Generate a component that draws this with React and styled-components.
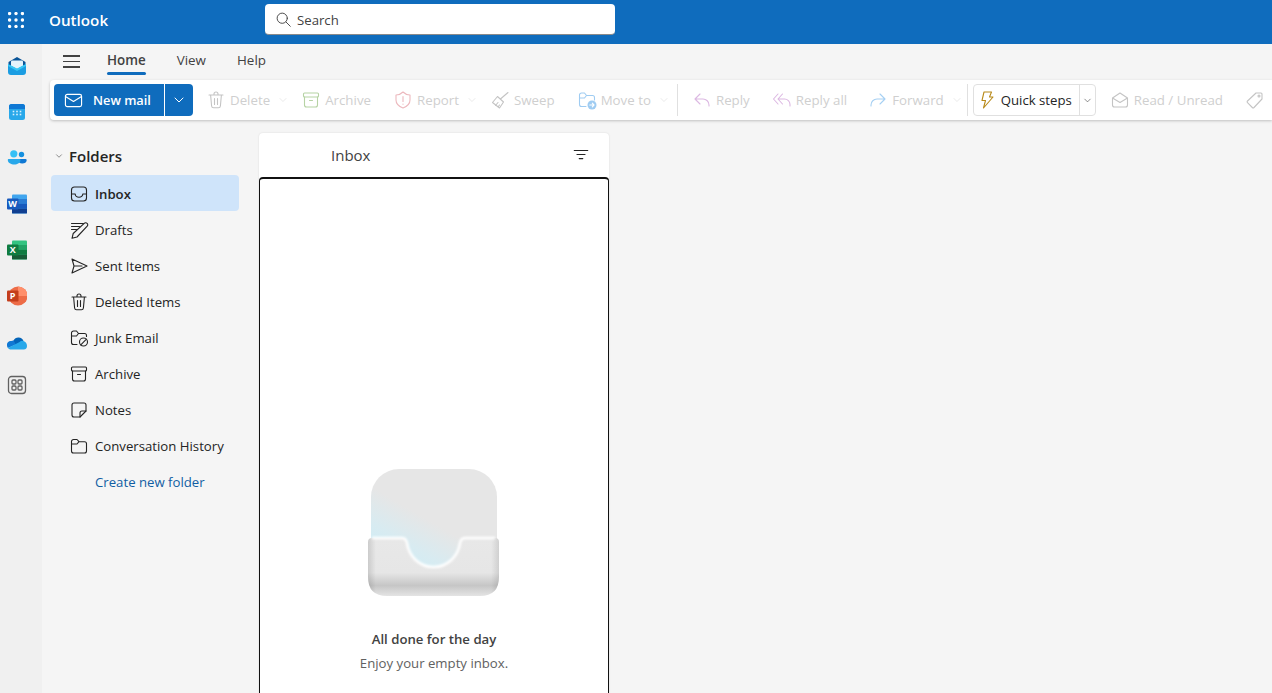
import styled, { createGlobalStyle } from "styled-components";
import { ChevronDown } from "lucide-react";

const GlobalStyle = createGlobalStyle`
  html, body {
    margin: 0;
    height: 100%;
    overflow: hidden;
    background: #f5f5f5;
    font-family: "Open Sans", "Noto Sans", sans-serif;
    font-size: 13.2px;
    color: #242424;
  }
  * { box-sizing: border-box; }
`;

const Line = ({ size = 20, children, ...rest }) => (
  <svg
    width={size}
    height={size}
    viewBox="0 0 20 20"
    fill="none"
    stroke="currentColor"
    strokeWidth="1.1"
    strokeLinecap="round"
    strokeLinejoin="round"
    {...rest}
  >
    {children}
  </svg>
);

const icons = {
  trash: <path d="M3 5h14M8 5V4a2 2 0 0 1 4 0v1M4.6 5l1 11a2 2 0 0 0 2 1.8h4.8a2 2 0 0 0 2-1.8l1-11M8.5 8.5v6M11.5 8.5v6" />,
  archive: (
    <>
      <rect x="2.5" y="3" width="15" height="4" rx="1" />
      <path d="M3.5 7v8a2 2 0 0 0 2 2h9a2 2 0 0 0 2-2V7M8.5 10.5h3" />
    </>
  ),
  shield: (
    <>
      <path d="M10 2c2 2 4.5 3 7 3v5c0 4-3 6.5-7 8-4-1.5-7-4-7-8V5c2.5 0 5-1 7-3z" />
      <path d="M10 6.5v5M10 14v.2" />
    </>
  ),
  sweep: <path d="M18 2.5l-7 6M7.5 6.5l6 5.5-4 6-7-5.5zM5.5 15.5l2.5-3M8 17l1.5-2" />,
  moveto: (
    <>
      <path d="M9 16.5H4.500a2 2 0 0 1-2-2V5a2 2 0 0 1 2-2h3l2 2.5h6a2 2 0 0 1 2 2V10M2.500 8h5l2-2.500" />
      <circle cx="15" cy="15" r="4.5" fill="currentColor" stroke="none" />
      <path d="M12.800 15h4.200M15.300 13.200L17 15l-1.700 1.800" stroke="#fff" />
    </>
  ),
  reply: <path d="M8 4L3 9l5 5M3 9h8a6 6 0 0 1 6 6v1" />,
  replyAll: <path d="M6 4L1.500 9 6 14M10.500 4L6 9l4.500 5M6 9h6.500a5.500 5.500 0 0 1 5.500 5.500V16" />,
  forward: <path d="M12 4l5 5-5 5M17 9H9a6 6 0 0 0-6 6v1" />,
  bolt: <path d="M7 2h7.500l-2 5H16L6.500 18l2-7.500H5z" />,
  readUnread: <path d="M2.500 8L10 3l7.500 5v7a2 2 0 0 1-2 2h-11a2 2 0 0 1-2-2zM2.500 8L10 12.500 17.500 8" />,
  tag: (
    <>
      <path d="M11 3h5a1 1 0 0 1 1 1v5l-8 8.500a1.200 1.200 0 0 1-1.700 0l-4.800-4.800a1.200 1.200 0 0 1 0-1.700z" />
      <circle cx="14" cy="6" r="1" />
    </>
  ),
  inbox: (
    <>
      <rect x="2.500" y="3" width="15" height="14" rx="3" />
      <path d="M2.500 10h3.700a3.800 3.300 0 0 0 7.600 0h3.700" />
    </>
  ),
  drafts: <path d="M2.500 3.500h12M2.500 6.500h8M2.500 9.500h5M15.200 3.400a2 2 0 0 1 3 2.800L8 17l-5 1.300 1.200-4.800z" />,
  sent: <path d="M3 3l15 7-15 7 2-7zM5 10h8" />,
  junk: (
    <>
      <path d="M8 16.500H4.500a2 2 0 0 1-2-2V5a2 2 0 0 1 2-2h3l2 2.500h6a2 2 0 0 1 2 2v1M2.500 8h5l2-2.500" />
      <circle cx="14.500" cy="14" r="4" />
      <path d="M11.800 16.800l5.400-5.400" />
    </>
  ),
  notes: (
    <>
      <path d="M5 3h10a2 2 0 0 1 2 2v6l-6 6H5a2 2 0 0 1-2-2V5a2 2 0 0 1 2-2z" />
      <path d="M17 11h-4a2 2 0 0 0-2 2v4" />
    </>
  ),
  folder: <path d="M2.500 5.500a2 2 0 0 1 2-2H8l2 2.200h5.500a2 2 0 0 1 2 2V15a2 2 0 0 1-2 2h-11a2 2 0 0 1-2-2zM2.500 8H8l2-2.300" />,
};

const WaffleIcon = () => (
  <svg width="16" height="16" viewBox="0 0 16 16" fill="#fff">
    {[1.6, 8, 14.4].flatMap((y) =>
      [1.6, 8, 14.4].map((x) => <circle key={`${x}-${y}`} cx={x} cy={y} r="1.7" />)
    )}
  </svg>
);

const MailApp = () => (
  <svg width="20" height="20" viewBox="0 0 20 20">
    <path d="M10 1l8.500 5v4h-17V6z" fill="#0a5497" />
    <rect x="4" y="4.500" width="12" height="7" rx="1" fill="#e4f3fb" />
    <path d="M1 8l9 5 9-5v8a3 3 0 0 1-3 3H4a3 3 0 0 1-3-3z" fill="#1b9de2" />
    <path d="M1 8l9 4.500L19 8v2l-9 5-9-5z" fill="#37c6f4" />
  </svg>
);

const CalendarApp = () => (
  <svg width="18" height="18" viewBox="0 0 18 18">
    <rect x="1" y="1" width="16" height="16" rx="2.500" fill="#28a8ea" />
    <path d="M1 6V3.500A2.500 2.500 0 0 1 3.500 1h11A2.500 2.500 0 0 1 17 3.500V6z" fill="#0f78d4" />
    {[5.5, 9, 12.5].flatMap((x) =>
      [8.5, 11.5].map((y) => <rect key={`${x}-${y}`} x={x - 0.8} y={y - 0.8} width="1.6" height="1.6" fill="#d8f0fd" />)
    )}
  </svg>
);

const PeopleApp = () => (
  <svg width="20" height="20" viewBox="0 0 20 20">
    <circle cx="14.500" cy="6.500" r="2.700" fill="#1490df" />
    <path d="M11 11h7.500a1.200 1.200 0 0 1 1.200 1.200c0 2-2 3.300-4.500 3.300S11 14 11 11z" fill="#0f78d4" />
    <circle cx="6.800" cy="5.800" r="3.600" fill="#36c0f5" />
    <path d="M1.500 11h11a1 1 0 0 1 1 1c0 2.800-3 4.500-6.200 4.500S.8 14.800.8 12a1 1 0 0 1 .7-1z" fill="#28a8ea" />
  </svg>
);

const OfficeDoc = ({ back, stripes, badge, letter }) => (
  <svg width="20" height="20" viewBox="0 0 20 20">
    <rect x="5" y="0.5" width="15" height="19" rx="1" fill={back} />
    {stripes.map((c, i) => (
      <rect key={c} x="5" y={5 + i * 4.8} width="15" height="4.8" fill={c} />
    ))}
    <rect x="0" y="4.500" width="11.500" height="11" rx="1" fill={badge} />
    <text x="5.700" y="13.300" fontSize="9" fontWeight="700" textAnchor="middle" fill="#fff" fontFamily="Open Sans, sans-serif">
      {letter}
    </text>
  </svg>
);

const PowerPointApp = () => (
  <svg width="20" height="20" viewBox="0 0 20 20">
    <circle cx="11" cy="10" r="9.500" fill="#ed6c47" />
    <path d="M11 .5a9.500 9.500 0 0 1 9.500 9.500H11z" fill="#ff8f6b" />
    <rect x="0" y="4.500" width="11.500" height="11" rx="1" fill="#c43e1c" />
    <text x="5.700" y="13.300" fontSize="9" fontWeight="700" textAnchor="middle" fill="#fff" fontFamily="Open Sans, sans-serif">
      P
    </text>
  </svg>
);

const OneDriveApp = () => (
  <svg width="20" height="16" viewBox="0 0 20 16">
    <path d="M6.500 6.500A5.500 5.500 0 0 1 16.500 7L11 12 4 9.500z" fill="#0364b8" />
    <path d="M6.500 6.500a4.500 4.500 0 0 0-2.200.5A3.800 3.800 0 0 0 0 11.500c0 .9.300 1.800.9 2.500L9 10.500z" fill="#0f78d4" />
    <path d="M16.500 7a3.800 3.800 0 0 0-3.900 1L.9 14c.6.900 1.700 1.500 3.100 1.500h12.800A3.500 3.500 0 0 0 20 12c0-2.500-1.500-4.500-3.500-5z" fill="#28a8ea" />
  </svg>
);

const MoreAppsIcon = () => (
  <svg width="20" height="20" viewBox="0 0 20 20" fill="none" stroke="#616161" strokeWidth="1.3">
    <rect x="1.500" y="1.500" width="17" height="17" rx="3" />
    <rect x="5" y="5" width="4" height="4" rx="1" />
    <rect x="11" y="5" width="4" height="4" rx="1" />
    <rect x="5" y="11" width="4" height="4" rx="1" />
    <rect x="11" y="11" width="4" height="4" rx="1" />
  </svg>
);

const TRAY = "M4 69H34Q38 69 39 74C41 88 52 98 65.500 98C79 98 90 88 92 74Q93 69 97 69H127Q131 69 131 73V108Q131 127 112 127H19Q0 127 0 108V73Q0 69 4 69Z";

const EmptyInboxArt = () => (
  <svg width="132" height="128" viewBox="0 0 132 128">
    <defs>
      <linearGradient id="back" x1="0.2" y1="0.85" x2="0.46" y2="0.42">
        <stop offset="0" stopColor="#cdeef7" />
        <stop offset="0.5" stopColor="#d8ebf1" />
        <stop offset="1" stopColor="#e6e6e6" />
      </linearGradient>
      <linearGradient id="tray" x1="0" y1="0" x2="0" y2="1">
        <stop offset="0" stopColor="#e8e8e8" />
        <stop offset="0.6" stopColor="#e6e6e6" />
        <stop offset="0.82" stopColor="#c6c6c6" />
        <stop offset="1" stopColor="#e4e4e4" />
      </linearGradient>
      <linearGradient id="edges" x1="0" y1="0" x2="1" y2="0">
        <stop offset="0" stopColor="#000" stopOpacity="0.12" />
        <stop offset="0.06" stopColor="#000" stopOpacity="0" />
        <stop offset="0.94" stopColor="#000" stopOpacity="0" />
        <stop offset="1" stopColor="#000" stopOpacity="0.1" />
      </linearGradient>
      <filter id="soft" x="-5%" y="-10%" width="110%" height="120%">
        <feGaussianBlur stdDeviation="0.9" />
      </filter>
    </defs>
    <rect x="3" y="0" width="126" height="122" rx="28" fill="url(#back)" />
    <path d={TRAY} fill="url(#tray)" />
    <path d={TRAY} fill="url(#edges)" />
    <path
      d="M4 69H34Q38 69 39 74C41 88 52 98 65.500 98C79 98 90 88 92 74Q93 69 97 69H127"
      fill="none"
      stroke="#fff"
      strokeWidth="2.5"
      filter="url(#soft)"
    />
  </svg>
);

const tools = [
  { icon: "trash", label: "Delete", tint: "#c4c4c4", caret: true, after: 12 },
  { icon: "archive", label: "Archive", tint: "#b6d3a4", after: 22 },
  { icon: "shield", label: "Report", tint: "#ecb8bd", caret: true, after: 12 },
  { icon: "sweep", label: "Sweep", tint: "#c4c4c4", after: 22 },
  { icon: "moveto", label: "Move to", tint: "#9fccf2", caret: true, after: 7 },
];

const replies = [
  { icon: "reply", label: "Reply", tint: "#dcb8e2", after: 22 },
  { icon: "replyAll", label: "Reply all", tint: "#dcb8e2", after: 21 },
  { icon: "forward", label: "Forward", tint: "#a6d0f3", caret: true, after: 4 },
];

const folders = [
  { icon: "inbox", label: "Inbox", active: true },
  { icon: "drafts", label: "Drafts" },
  { icon: "sent", label: "Sent Items" },
  { icon: "trash", label: "Deleted Items" },
  { icon: "junk", label: "Junk Email" },
  { icon: "archive", label: "Archive" },
  { icon: "notes", label: "Notes" },
  { icon: "folder", label: "Conversation History" },
];

const ToolItem = ({ icon, label, tint, caret, after }) => (
  <ToolButton $after={after}>
    <ToolIcon $tint={tint}>
      <Line>{icons[icon]}</Line>
    </ToolIcon>
    {label}
    {caret && (
      <ToolCaret>
        <ChevronDown size={12} strokeWidth={1.2} />
      </ToolCaret>
    )}
  </ToolButton>
);

export default function App() {
  return (
    <>
      <GlobalStyle />
      <Page>
        <TopBar>
          <Waffle>
            <WaffleIcon />
          </Waffle>
          <Brand>Outlook</Brand>
          <SearchBox>
            <Line size={17}>
              <circle cx="8.500" cy="8.500" r="6" />
              <path d="M13 13l5 5" />
            </Line>
            <SearchText>Search</SearchText>
          </SearchBox>
        </TopBar>

        <Body>
          <Rail>
            <RailItem><MailApp /></RailItem>
            <RailItem><CalendarApp /></RailItem>
            <RailItem><PeopleApp /></RailItem>
            <RailItem>
              <OfficeDoc back="#41a5ee" stripes={["#2b7cd3", "#185abd", "#103f91"]} badge="#185abd" letter="W" />
            </RailItem>
            <RailItem>
              <OfficeDoc back="#33c481" stripes={["#21a366", "#107c41", "#185c37"]} badge="#107c41" letter="X" />
            </RailItem>
            <RailItem><PowerPointApp /></RailItem>
            <RailItem><OneDriveApp /></RailItem>
            <RailItem $tight><MoreAppsIcon /></RailItem>
          </Rail>

          <Main>
            <TabRow>
              <Burger>
                <span />
                <span />
                <span />
              </Burger>
              <Tab $active>Home</Tab>
              <Tab>View</Tab>
              <Tab>Help</Tab>
            </TabRow>

            <Ribbon>
              <NewMail>
                <NewMailMain>
                  <Line size={19} strokeWidth="1.2">
                    <rect x="1.500" y="3.500" width="17" height="13" rx="2" />
                    <path d="M2 6l8 5 8-5" />
                  </Line>
                  New mail
                </NewMailMain>
                <NewMailCaret>
                  <ChevronDown size={16} strokeWidth={1.5} />
                </NewMailCaret>
              </NewMail>

              {tools.map((t) => (
                <ToolItem key={t.label} {...t} />
              ))}
              <RibbonDivider $after={14} />
              {replies.map((t) => (
                <ToolItem key={t.label} {...t} />
              ))}
              <RibbonDivider $after={5} />

              <QuickSteps>
                <QuickMain>
                  <ToolIcon $tint="#b88a1a">
                    <Line>{icons.bolt}</Line>
                  </ToolIcon>
                  Quick steps
                </QuickMain>
                <QuickCaret>
                  <ChevronDown size={11} strokeWidth={1.3} />
                </QuickCaret>
              </QuickSteps>

              <ToolItem icon="readUnread" label="Read / Unread" tint="#c4c4c4" after={22} />
              <ToolButton>
                <ToolIcon $tint="#c4c4c4">
                  <Line>{icons.tag}</Line>
                </ToolIcon>
              </ToolButton>
            </Ribbon>

            <Content>
              <FolderPane>
                <FolderHead>
                  <ChevronDown size={10} strokeWidth={1.2} />
                  Folders
                </FolderHead>
                {folders.map((f) => (
                  <FolderRow key={f.label} $active={f.active}>
                    <Line>{icons[f.icon]}</Line>
                    {f.label}
                  </FolderRow>
                ))}
                <CreateLink>Create new folder</CreateLink>
              </FolderPane>

              <ListPane>
                <ListHead>
                  <ListTitle>Inbox</ListTitle>
                  <Line size={18} strokeWidth="1.2">
                    <path d="M2.500 5h15M5.500 9.500h9M8 14h4" />
                  </Line>
                </ListHead>
                <ListBody>
                  <EmptyInboxArt />
                  <EmptyTitle>All done for the day</EmptyTitle>
                  <EmptyText>Enjoy your empty inbox.</EmptyText>
                </ListBody>
              </ListPane>
            </Content>
          </Main>
        </Body>
      </Page>
    </>
  );
}

const Page = styled.div`
  height: 100vh;
  display: flex;
  flex-direction: column;
`;

const TopBar = styled.header`
  height: 44px;
  flex: none;
  background: #0f6cbd;
  display: flex;
  align-items: center;
`;

const Waffle = styled.div`
  width: 49px;
  padding-left: 8px;
  display: flex;
  margin-top: -5px;
`;

const Brand = styled.div`
  width: 216px;
  color: #fff;
  font-size: 15.2px;
  font-weight: 600;
  margin-top: -5px;
`;

const SearchBox = styled.div`
  width: 350px;
  height: 31px;
  margin-top: -5px;
  padding-left: 10px;
  background: #fff;
  border-radius: 4px;
  border-bottom: 1px solid #8a8a8a;
  display: flex;
  align-items: center;
  gap: 5px;
  color: #424242;
`;

const SearchText = styled.span`
  padding-top: 2px;
`;

const Body = styled.div`
  flex: 1;
  min-height: 0;
  display: flex;
`;

const Rail = styled.nav`
  width: 42px;
  flex: none;
  background: #f0f0f0;
  display: flex;
  flex-direction: column;
  gap: 2px;
`;

const RailItem = styled.div`
  height: 44px;
  padding-right: 8px;
  display: flex;
  align-items: center;
  justify-content: center;
  margin-top: ${(p) => (p.$tight ? "-3px" : "0")};
`;

const Main = styled.main`
  flex: 1;
  min-width: 0;
  display: flex;
  flex-direction: column;
`;

const TabRow = styled.div`
  height: 36px;
  padding-left: 21px;
  display: flex;
  align-items: flex-start;
`;

const Burger = styled.div`
  width: 44px;
  padding-top: 11px;
  display: flex;
  flex-direction: column;
  gap: 4px;

  span {
    display: block;
    width: 17px;
    height: 1.5px;
    background: #424242;
  }
`;

const Tab = styled.div`
  margin-right: 31px;
  padding-top: 7px;
  font-size: 13.4px;
  line-height: 18px;
  color: #424242;
  font-weight: ${(p) => (p.$active ? 600 : 400)};

  &::after {
    content: "";
    display: block;
    height: 3px;
    margin-top: 3px;
    border-radius: 2px;
    background: ${(p) => (p.$active ? "#0f6cbd" : "transparent")};
  }
`;

const Ribbon = styled.div`
  height: 40px;
  flex: none;
  margin-left: 8px;
  padding-left: 4px;
  background: #fff;
  border-radius: 4px 0 0 4px;
  box-shadow: 0 1px 3px rgba(0, 0, 0, 0.22);
  display: flex;
  align-items: center;
  white-space: nowrap;
  overflow: hidden;
`;

const NewMail = styled.div`
  height: 32px;
  margin-right: 13px;
  flex: none;
  display: flex;
  color: #fff;
  font-weight: 600;
  font-size: 12.8px;
`;

const NewMailMain = styled.div`
  width: 110px;
  padding-left: 10px;
  background: #0f6cbd;
  border-radius: 4px 0 0 4px;
  display: flex;
  align-items: center;
  gap: 10px;
`;

const NewMailCaret = styled.div`
  width: 28px;
  margin-left: 1px;
  background: #0f6cbd;
  border-radius: 0 4px 4px 0;
  display: flex;
  align-items: center;
  justify-content: center;
`;

const ToolButton = styled.div`
  margin-right: ${(p) => p.$after ?? 0}px;
  display: flex;
  align-items: center;
  gap: 4px;
  color: #cfcfcf;
  font-weight: 500;
  font-size: 13.3px;
  flex: none;
`;

const ToolIcon = styled.span`
  display: flex;
  color: ${(p) => p.$tint};
`;

const ToolCaret = styled.span`
  display: flex;
  margin-left: 3px;
  color: #dcdcdc;
`;

const RibbonDivider = styled.div`
  width: 1px;
  height: 32px;
  flex: none;
  margin-right: ${(p) => p.$after}px;
  background: #e0e0e0;
`;

const QuickSteps = styled.div`
  height: 32px;
  width: 123px;
  margin-right: 14px;
  flex: none;
  display: flex;
  border: 1px solid #e0e0e0;
  border-radius: 4px;
  color: #242424;
  font-size: 13.2px;
`;

const QuickMain = styled.div`
  width: 106px;
  padding-left: 3px;
  display: flex;
  align-items: center;
  gap: 4px;
  border-right: 1px solid #e0e0e0;
`;

const QuickCaret = styled.div`
  flex: 1;
  display: flex;
  align-items: center;
  justify-content: center;
  color: #424242;
`;

const Content = styled.div`
  flex: 1;
  min-height: 0;
  display: flex;
`;

const FolderPane = styled.aside`
  width: 197px;
  margin-left: 9px;
  padding-top: 17px;
  flex: none;
`;

const FolderHead = styled.div`
  height: 38px;
  padding-left: 3px;
  display: flex;
  align-items: center;
  gap: 5px;
  font-size: 15px;
  font-weight: 600;
  color: #242424;
`;

const FolderRow = styled.div`
  width: 188px;
  height: 36px;
  padding: 2px 0 0 18px;
  display: flex;
  align-items: center;
  gap: 6px;
  border-radius: 4px;
  background: ${(p) => (p.$active ? "#cfe4fa" : "transparent")};
  font-weight: ${(p) => (p.$active ? 600 : 400)};
  color: #242424;
`;

const CreateLink = styled.div`
  height: 36px;
  padding: 2px 0 0 44px;
  display: flex;
  align-items: center;
  color: #115ea3;
`;

const ListPane = styled.section`
  width: 350px;
  margin-left: 11px;
  margin-top: 13px;
  display: flex;
  flex-direction: column;
  box-shadow: 0 0 2px rgba(0, 0, 0, 0.12);
  border-radius: 4px 4px 0 0;
  background: #fff;
`;

const ListHead = styled.div`
  height: 44px;
  flex: none;
  padding: 0 19px 0 72px;
  display: flex;
  align-items: center;
  justify-content: space-between;
`;

const ListTitle = styled.div`
  font-size: 15px;
  font-weight: 500;
  color: #424242;
`;

const ListBody = styled.div`
  flex: 1;
  min-height: 0;
  padding-top: 290px;
  border: 1px solid #111;
  border-top-width: 2px;
  border-bottom: 0;
  border-radius: 4px 4px 0 0;
  display: flex;
  flex-direction: column;
  align-items: center;
`;

const EmptyTitle = styled.div`
  margin-top: 33px;
  line-height: 18px;
  font-weight: 600;
  color: #424242;
`;

const EmptyText = styled.div`
  margin-top: 6px;
  line-height: 18px;
  color: #616161;
`;
